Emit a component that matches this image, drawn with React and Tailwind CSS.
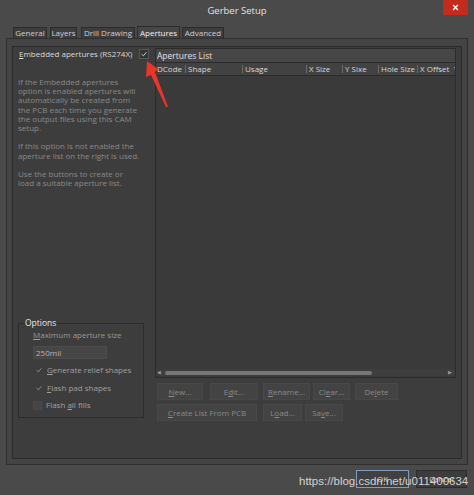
import React from "react";

const descLines = [
    "If the Embedded apertures",
    "option is enabled apertures will",
    "automatically be created from",
    "the PCB each time you generate",
    "the output files using this CAM",
    "setup.",
    "",
    "If this option is not enabled the",
    "aperture list on the right is used.",
    "",
    "Use the buttons to create or",
    "load a suitable aperture list.",
];

const columns = [
    { label: "DCode", w: "w-[29px]", sep: false },
    { label: "Shape", w: "w-[57px]", sep: true },
    { label: "Usage", w: "w-[64px]", sep: true },
    { label: "X Size", w: "w-[36px]", sep: true },
    { label: "Y Sixe", w: "w-[36px]", sep: true },
    { label: "Hole Size", w: "w-[39px]", sep: true },
    { label: "X Offset", w: "w-[36px]", sep: true },
    { label: "Y Offset", w: "w-[40px]", sep: false },
];

function Check({ className = "" }) {
    return (
        <svg viewBox="0 0 10 10" className={className}>
            <path d="M2 5.2 L4.2 7.3 L8 2.8" fill="none" stroke="currentColor" strokeWidth="1.2" />
        </svg>
    );
}

function Mn({ text, at }) {
    // underline the mnemonic letter
    return (
        <span>
            {text.slice(0, at)}
            <span className="underline">{text[at]}</span>
            {text.slice(at + 1)}
        </span>
    );
}

function Btn({ w, ml, children }) {
    return (
        <div className={`${w} ${ml} h-[17px] flex items-center justify-center bg-[#434343] border border-[#484848] text-[#8a8a8a]`}>
            {children}
        </div>
    );
}

function OptRow({ checked, children }) {
    return (
        <div className="flex items-center h-[12px]">
            {checked ? (
                <div className="w-[9px] h-[9px] ml-[1px] flex items-center justify-center text-[#8c8c8c]">
                    <Check className="w-[8px] h-[8px]" />
                </div>
            ) : (
                <div className="w-[9px] h-[9px] bg-[#454545] border border-[#4a4a4a]" />
            )}
            <span className="ml-[4px] text-[#a0a0a0]">{children}</span>
        </div>
    );
}

export default function App() {
    return (
        <div className="relative w-[474px] h-[495px] overflow-hidden bg-[#4a4a4a] text-[8px] leading-[10px] text-[#d6d6d6] font-['Open_Sans',sans-serif]">
            {/* title bar */}
            <div className="h-[27px] grid grid-cols-[1fr_auto_1fr] items-start">
                <div />
                <div className="pt-[5px] text-[9.5px] leading-[12px] text-[#e2e2e2]">Gerber Setup</div>
                <div className="justify-self-end mr-[6px] w-[25px] h-[15px] bg-[#c42b1c] flex items-center justify-center text-white">
                    <svg viewBox="0 0 10 10" className="w-[7px] h-[7px]">
                        <path d="M1.5 1.5 L8.5 8.5 M8.5 1.5 L1.5 8.5" stroke="currentColor" strokeWidth="1.8" />
                    </svg>
                </div>
            </div>

            {/* tabs */}
            <div className="h-[11px] flex items-end pl-[13px]">
                <div className="w-[34px] h-[11px] flex items-center justify-center bg-[#3d3d3d] border border-b-0 border-[#2c2c2c] text-[#cfcfcf]">General</div>
                <div className="ml-[3px] w-[27px] h-[11px] flex items-center justify-center bg-[#3d3d3d] border border-b-0 border-[#2c2c2c] text-[#cfcfcf]">Layers</div>
                <div className="ml-[4px] w-[54px] h-[11px] flex items-center justify-center bg-[#3d3d3d] border border-b-0 border-[#2c2c2c] text-[#cfcfcf]">Drill Drawing</div>
                <div className="ml-[2px] w-[43px] h-[12px] flex items-center justify-center bg-[#474747] border border-b-0 border-[#2c2c2c] text-[#f0f0f0]">Apertures</div>
                <div className="ml-[2px] w-[42px] h-[11px] flex items-center justify-center bg-[#3d3d3d] border border-b-0 border-[#2c2c2c] text-[#cfcfcf]">Advanced</div>
            </div>

            {/* tab panel */}
            <div className="mx-[6px] h-[427px] border border-[#2f2f2f] bg-[#444444] pt-[7px] px-[5px] pb-[5px]">
                <div className="h-full border border-[#2a2a2a] bg-[#3d3d3d] flex">
                    {/* left column */}
                    <div className="w-[140px] flex flex-col">
                        <div className="mt-[1px] h-[11px] flex items-center pl-[6px]">
                            <span className="text-[#dadada]"><Mn text="Embedded apertures (RS274X)" at={0} /></span>
                            <div className="ml-auto mr-[4px] w-[10px] h-[10px] bg-[#343434] border border-[#585858] flex items-center justify-center text-[#d0d0d0]">
                                <Check className="w-[8px] h-[8px]" />
                            </div>
                        </div>
                        <div className="mt-[18px] pl-[5px] text-[#8a8a8a]">
                            {descLines.map((l, i) => (
                                <div key={i} className="h-[9.2px] leading-[9.2px] whitespace-nowrap">{l}</div>
                            ))}
                        </div>

                        <fieldset className="mt-auto mb-[40px] ml-[5px] w-[126px] border border-[#2c2c2c] pl-[14px] pb-[6px]">
                            <legend className="ml-[-9px] px-[1px] text-[8.5px] leading-[10px] text-[#e8e8e8]">Options</legend>
                            <div className="pt-[2px] text-[#9a9a9a]"><Mn text="Maximum aperture size" at={0} /></div>
                            <div className="mt-[6px] w-[74px] h-[13px] bg-[#464646] border border-[#4c4c4c] flex items-center pl-[2px] text-[#b4b4b4]">250mil</div>
                            <div className="mt-[5px]"><OptRow checked><Mn text="Generate relief shapes" at={0} /></OptRow></div>
                            <div className="mt-[6px]"><OptRow checked><Mn text="Flash pad shapes" at={0} /></OptRow></div>
                            <div className="mt-[5px]"><OptRow><Mn text="Flash all fills" at={6} /></OptRow></div>
                        </fieldset>
                    </div>

                    {/* right column */}
                    <div className="flex-1 flex flex-col">
                        <div className="mt-[1px] ml-[2px] w-[301px] h-[330px] border border-[#2b2b2b] flex flex-col bg-[#3a3a3a]">
                            <div className="h-[14px] shrink-0 flex items-center pl-[1px] bg-[#464646] border-b border-[#2b2b2b] text-[8.5px] text-[#e0e0e0]">
                                Apertures List
                            </div>
                            <div className="h-[13px] shrink-0 flex items-center bg-[#424242] border-b border-[#2b2b2b] overflow-hidden text-[#d8d8d8]">
                                {columns.map((c) => (
                                    <div key={c.label} className={`${c.w} shrink-0 h-full flex items-center whitespace-nowrap`}>
                                        {c.sep && <div className="w-px h-[8px] bg-[#6a6a6a] mr-[1px]" />}
                                        <span className="pl-[1px]">{c.label}</span>
                                    </div>
                                ))}
                            </div>
                            <div className="flex-1" />
                            <div className="h-[7px] shrink-0 mb-[1px] flex items-center px-[1px] bg-[#3e3e3e]">
                                <span className="text-[5px] leading-[5px] text-[#9a9a9a]">◀</span>
                                <div className="ml-[4px] w-[207px] h-[4px] rounded-full bg-[#767676]" />
                                <div className="flex-1" />
                                <span className="text-[5px] leading-[5px] text-[#9a9a9a] mr-[2px]">▶</span>
                            </div>
                        </div>

                        <div className="mt-[5px] flex">
                            <Btn w="w-[46px]" ml="ml-[4px]"><Mn text="New..." at={0} /></Btn>
                            <Btn w="w-[48px]" ml="ml-[7px]"><Mn text="Edit..." at={1} /></Btn>
                            <Btn w="w-[47px]" ml="ml-[5px]"><Mn text="Rename..." at={0} /></Btn>
                            <Btn w="w-[37px]" ml="ml-[3px]"><Mn text="Clear..." at={2} /></Btn>
                            <Btn w="w-[43px]" ml="ml-[5px]"><Mn text="Delete" at={2} /></Btn>
                        </div>
                        <div className="mt-[4px] flex">
                            <Btn w="w-[100px]" ml="ml-[4px]"><Mn text="Create List From PCB" at={0} /></Btn>
                            <Btn w="w-[39px]" ml="ml-[6px]"><Mn text="Load..." at={1} /></Btn>
                            <Btn w="w-[38px]" ml="ml-[3px]"><Mn text="Save..." at={2} /></Btn>
                        </div>
                    </div>
                </div>
            </div>

            {/* footer */}
            <div className="flex justify-end pr-[7px] pt-[5px] gap-[7px]">
                <div className="w-[53px] h-[18px] flex items-center justify-center bg-[#404040] border border-[#7d9ec2] text-[#d0d0d0]">OK</div>
                <div className="w-[51px] h-[18px] flex items-center justify-center bg-[#3c3c3c] border border-[#2c2c2c] text-[#d0d0d0]">Cancel</div>
            </div>

            {/* watermark */}
            <div className="absolute left-[299px] top-[474px] text-[11.5px] leading-[14px] text-[#e4e4e4]/90 font-['Liberation_Sans',Arial,sans-serif] whitespace-nowrap">
                https://blog.csdn.net/u011400634
            </div>

            {/* annotation arrow */}
            <svg className="absolute left-0 top-0 pointer-events-none" width="474" height="495" viewBox="0 0 474 495">
                <polygon points="147,61 158,69 155,72 168,107 166,107 151,75 146,77" fill="#e8362b" />
            </svg>
        </div>
    );
}
